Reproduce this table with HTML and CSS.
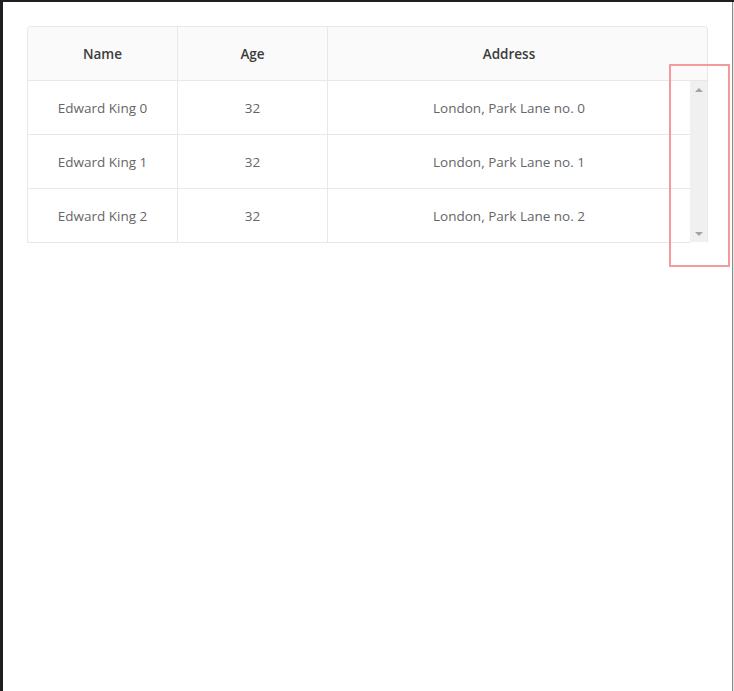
FILE: index.html
```html
<!DOCTYPE html>
<html>
<head>
<meta charset="utf-8">
<link rel="stylesheet" href="styles.css">
</head>
<body>
<div class="screen">
  <div class="window">
    <div class="table">
      <div class="thead">
        <div class="th bordered">Name</div>
        <div class="th bordered">Age</div>
        <div class="th">Address</div>
        <div class="th gutter"></div>
      </div>
      <div class="tbody">
        <div class="rows">
          <div class="tr">
            <div class="td bordered">Edward King 0</div>
            <div class="td bordered">32</div>
            <div class="td">London, Park Lane no. 0</div>
          </div>
          <div class="tr">
            <div class="td bordered">Edward King 1</div>
            <div class="td bordered">32</div>
            <div class="td">London, Park Lane no. 1</div>
          </div>
          <div class="tr">
            <div class="td bordered">Edward King 2</div>
            <div class="td bordered">32</div>
            <div class="td">London, Park Lane no. 2</div>
          </div>
        </div>
        <div class="scrollbar">
          <span class="arrow up"></span>
          <span class="arrow down"></span>
        </div>
      </div>
    </div>
    <div class="highlight"></div>
  </div>
  <div class="edge"></div>
</div>
</body>
</html>
```

FILE: styles.css
```css
* { box-sizing: border-box; }
html, body { margin: 0; padding: 0; background: #fff; }
body {
  font-family: "Open Sans", "Noto Sans", sans-serif;
  font-size: 13.5px;
}
.screen {
  display: flex;
  width: 734px;
  height: 691px;
  border-top: 2px solid #1e1f22;
}
.window {
  position: relative;
  width: 732px;
  height: 689px;
  border-left: 3px solid #1e1f22;
  padding: 24px 24px 0 24px;
  background: #fff;
}
.edge {
  width: 2px;
  border-left: 1px solid #8c8c8c;
  background: #e6e6e6;
}
.table {
  width: 681px;
  border: 1px solid #e8e8e8;
  border-bottom: none;
  border-radius: 4px 4px 0 0;
  overflow: hidden;
}
.thead {
  display: grid;
  grid-template-columns: 150px 150px 1fr 17px;
  height: 54px;
  background: #fafafa;
  border-bottom: 1px solid #e8e8e8;
}
.th {
  display: flex;
  align-items: center;
  justify-content: center;
  padding-top: 1px;
  color: #3c3c3c;
  font-weight: 600;
}
.bordered { border-right: 1px solid #e8e8e8; }
.tbody {
  display: flex;
}
.rows { flex: 1; }
.tr {
  display: grid;
  grid-template-columns: 150px 150px 1fr;
  height: 54px;
  border-bottom: 1px solid #e8e8e8;
}
.td {
  display: flex;
  align-items: center;
  justify-content: center;
  color: #666;
}
.scrollbar {
  width: 17px;
  height: 161px;
  background: #f0f0f0;
  display: flex;
  flex-direction: column;
  justify-content: space-between;
  align-items: center;
  padding: 7px 0 6px;
}
.arrow {
  width: 0;
  height: 0;
  border-left: 4px solid transparent;
  border-right: 4px solid transparent;
}
.arrow.up { border-bottom: 4px solid #a3a3a3; }
.arrow.down { border-top: 4px solid #a3a3a3; }
.highlight {
  position: absolute;
  left: 666px;
  top: 62px;
  width: 61px;
  height: 203px;
  border: 2px solid #f59a9a;
}
```
